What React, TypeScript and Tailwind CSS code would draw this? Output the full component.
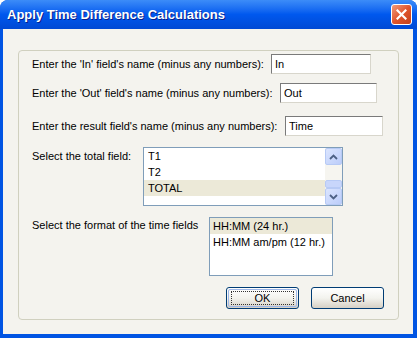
import React from "react";

const font = { fontFamily: '"Liberation Sans", Arial, sans-serif' };

function TextBox({ value, width }: { value: string; width: number }) {
  return (
    <div
      className="h-[20px] bg-white border border-t-[#7a7a7a] border-l-[#7a7a7a] border-r-[#d8d6cc] border-b-[#d8d6cc] flex items-center pl-[3px] text-[11px] text-black"
      style={{ width }}
    >
      {value}
    </div>
  );
}

function Arrow({ up }: { up?: boolean }) {
  return (
    <svg width="9" height="6" viewBox="0 0 9 6">
      <path
        d={up ? "M1 5 L4.5 1.5 L8 5" : "M1 1 L4.5 4.5 L8 1"}
        fill="none"
        stroke="#4d6185"
        strokeWidth="1.8"
      />
    </svg>
  );
}

function ScrollButton({ up }: { up?: boolean }) {
  return (
    <div className="h-[17px] w-[17px] rounded-[2px] border border-[#b7caf5] bg-gradient-to-br from-[#dbe5fe] to-[#bccdfa] flex items-center justify-center">
      <Arrow up={up} />
    </div>
  );
}

export default function App() {
  return (
    <div className="w-[417px] h-[338px] bg-white" style={font}>
      <div className="w-[417px] h-[338px] rounded-t-[8px] bg-[#0054e3] flex flex-col overflow-hidden">
        {/* title bar */}
        <div className="h-[29px] shrink-0 bg-gradient-to-b from-[#3c8cf8] via-[#0058ee] to-[#0049d4] flex items-center justify-between pl-[7px] pr-[5px]">
          <span className="text-white font-bold text-[13px] [text-shadow:1px_1px_0_#0a1f8a]">
            Apply Time Difference Calculations
          </span>
          <div className="w-[21px] h-[21px] rounded-[3px] border border-white bg-gradient-to-br from-[#f09a7a] via-[#e0552d] to-[#c4411c] flex items-center justify-center">
            <svg width="11" height="11" viewBox="0 0 11 11">
              <path d="M1.5 1.5 L9.5 9.5 M9.5 1.5 L1.5 9.5" stroke="white" strokeWidth="2.2" strokeLinecap="square" />
            </svg>
          </div>
        </div>

        {/* body */}
        <div className="flex-1 ml-[3px] mr-[4px] mb-[4px] bg-[#f4f3ee] pt-[21px] pl-[15px]">
          <div className="w-[381px] h-[270px] rounded-[4px] border border-[#d0d0bf] pl-[13px] pt-[3px] text-[11px] text-black flex flex-col">
            <div className="flex items-center h-[20px]">
              <span className="w-[239px]">Enter the 'In' field's name (minus any numbers):</span>
              <TextBox value="In" width={100} />
            </div>
            <div className="flex items-center h-[20px] mt-[9px]">
              <span className="w-[248px]">Enter the 'Out' field's name (minus any numbers):</span>
              <TextBox value="Out" width={97} />
            </div>
            <div className="flex items-center h-[20px] mt-[13px]">
              <span className="w-[253px]">Enter the result field's name (minus any numbers):</span>
              <TextBox value="Time" width={98} />
            </div>

            <div className="flex items-start mt-[11px]">
              <span className="w-[111px] mt-[1px]">Select the total field:</span>
              <div className="w-[200px] h-[59px] border border-[#7f9db9] bg-white flex">
                <div className="flex-1 flex flex-col">
                  <div className="h-[16px] pl-[4px] flex items-center">T1</div>
                  <div className="h-[16px] pl-[4px] flex items-center">T2</div>
                  <div className="h-[16px] pl-[4px] flex items-center bg-[#ece9d8]">TOTAL</div>
                </div>
                <div className="w-[17px] flex flex-col bg-[#f6f5f0]">
                  <ScrollButton up />
                  <div className="flex-1 flex flex-col justify-end">
                    <div className="h-[8px] rounded-[2px] border border-[#b7caf5] bg-[#c8d6fb]" />
                  </div>
                  <ScrollButton />
                </div>
              </div>
            </div>

            <div className="flex items-start mt-[11px]">
              <span className="w-[177px]">Select the format of the time fields</span>
              <div className="w-[124px] h-[59px] border border-[#7f9db9] bg-white flex flex-col">
                <div className="h-[16px] pl-[3px] flex items-center bg-[#ece9d8]">HH:MM (24 hr.)</div>
                <div className="h-[16px] pl-[3px] flex items-center">HH:MM am/pm (12 hr.)</div>
              </div>
            </div>

            <div className="flex justify-end gap-[12px] mt-[11px] pr-[14px]">
              <button className="w-[73px] h-[22px] rounded-[3px] border border-[#003c74] bg-gradient-to-b from-[#ffffff] via-[#f3f3ee] to-[#d6d0c5] p-[1px]">
                <div className="w-full h-full rounded-[2px] border border-[#9fb7e8] flex items-center justify-center">
                  <div className="px-[2px] h-[14px] w-[63px] border border-dotted border-[#333] flex items-center justify-center">
                    OK
                  </div>
                </div>
              </button>
              <button className="w-[73px] h-[22px] rounded-[3px] border border-[#003c74] bg-gradient-to-b from-[#ffffff] via-[#f3f3ee] to-[#d6d0c5] flex items-center justify-center">
                Cancel
              </button>
            </div>
          </div>
        </div>
      </div>
    </div>
  );
}
